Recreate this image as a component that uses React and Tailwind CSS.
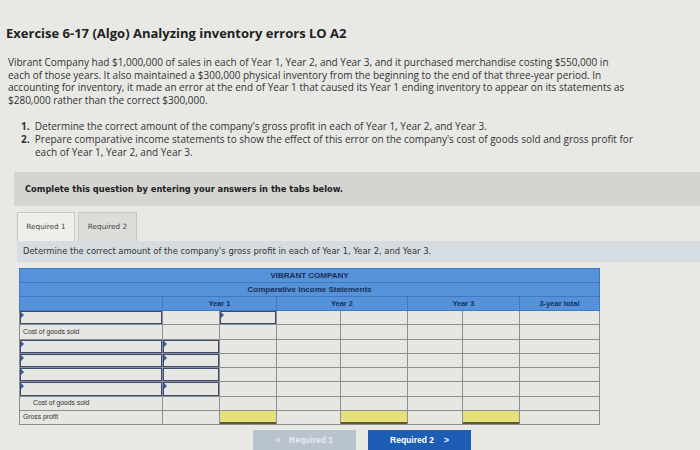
import React from "react";

// small blue marker shown at the top-left of dropdown cells
function Marker() {
    return (
        <span className="absolute left-[1px] top-[1px] w-0 h-0 border-t-[3px] border-b-[3px] border-l-[3px] border-t-transparent border-b-transparent border-l-[#2f5da8]" />
    );
}

function InputCell({ marker = true }) {
    return (
        <td className="relative border border-[#8e8e8e] p-0">
            <div className="absolute inset-0 border border-[#3a4a70]" />
            {marker && <Marker />}
        </td>
    );
}

function Cell({ children, className = "" }) {
    return (
        <td className={"border border-[#8e8e8e] p-0 pl-[3px] text-[6.8px] text-[#333] " + className}>
            {children}
        </td>
    );
}

function YellowCell() {
    return (
        <td className="border border-[#8e8e8e] bg-[#e4e07a] p-0 shadow-[inset_0_-2px_0_#5e5a2c]" />
    );
}

function App() {
    const dropRows = [0, 1, 2, 3];

    return (
        <div className="min-h-[450px] w-[700px] overflow-hidden bg-[#e8e8e4] pt-[25px] font-['Open_Sans','Liberation_Sans',sans-serif] text-[#2b2b2b]">
            <h1 className="pl-[6px] text-[13px] font-bold leading-[16px] text-[#222]">
                Exercise 6-17 (Algo) Analyzing inventory errors LO A2
            </h1>

            <p className="mt-[15px] pl-[8px] text-[10px] leading-[12.6px] whitespace-nowrap text-[#333]">
                Vibrant Company had $1,000,000 of sales in each of Year 1, Year 2, and Year 3, and it purchased merchandise costing $550,000 in<br />
                each of those years. It also maintained a $300,000 physical inventory from the beginning to the end of that three-year period. In<br />
                accounting for inventory, it made an error at the end of Year 1 that caused its Year 1 ending inventory to appear on its statements as<br />
                $280,000 rather than the correct $300,000.
            </p>

            <div className="mt-[14px] pl-[21px] text-[10px] leading-[12.6px] whitespace-nowrap text-[#333]">
                <b>1.</b>&nbsp; Determine the correct amount of the company's gross profit in each of Year 1, Year 2, and Year 3.<br />
                <b>2.</b>&nbsp; Prepare comparative income statements to show the effect of this error on the company's cost of goods sold and gross profit for<br />
                <span className="pl-[14px]">each of Year 1, Year 2, and Year 3.</span>
            </div>

            <div className="mt-[14px] ml-[14px] flex h-[34px] items-center bg-[#d4d4d0] pl-[11px]">
                <span className="font-['DejaVu_Sans',sans-serif] text-[8.3px] font-bold text-[#222]">
                    Complete this question by entering your answers in the tabs below.
                </span>
            </div>

            <div className="ml-[17px] mt-[6px]">
                <div className="flex h-[29px] items-stretch gap-[3px] font-['DejaVu_Sans',sans-serif] text-[7.3px] text-[#444]">
                    <div className="flex w-[58px] items-center justify-center border border-b-0 border-[#c6c6c2] bg-[#eeeeea]">
                        Required 1
                    </div>
                    <div className="flex w-[59px] items-center justify-center border border-b-0 border-[#c6c6c2] bg-[#dcdcd8]">
                        Required 2
                    </div>
                </div>

                <div className="flex h-[21px] items-center bg-[#d6dde2] pl-[6px] font-['DejaVu_Sans',sans-serif] text-[8.4px] text-[#333]">
                    Determine the correct amount of the company's gross profit in each of Year 1, Year 2, and Year 3.
                </div>

                <table className="mt-[6px] ml-[2px] w-[580px] table-fixed border-collapse font-['Liberation_Sans',sans-serif]">
                    <colgroup>
                        <col className="w-[143px]" />
                        <col className="w-[57px]" />
                        <col className="w-[57px]" />
                        <col className="w-[64px]" />
                        <col className="w-[67px]" />
                        <col className="w-[55px]" />
                        <col className="w-[57px]" />
                        <col className="w-[80px]" />
                    </colgroup>
                    <thead className="bg-[#5592d9] text-[8px] font-bold text-[#1b2f57]">
                        <tr className="h-[14px]">
                            <th colSpan={8} className="border border-[#3f78bf] p-0 text-center">VIBRANT COMPANY</th>
                        </tr>
                        <tr className="h-[14px]">
                            <th colSpan={8} className="border border-[#3f78bf] p-0 text-center">Comparative Income Statements</th>
                        </tr>
                        <tr className="h-[14px] text-[7.5px]">
                            <th className="border border-[#3f78bf] p-0" />
                            <th colSpan={2} className="border border-[#3f78bf] p-0 text-center">Year 1</th>
                            <th colSpan={2} className="border border-[#3f78bf] p-0 text-center">Year 2</th>
                            <th colSpan={2} className="border border-[#3f78bf] p-0 text-center">Year 3</th>
                            <th className="border border-[#3f78bf] p-0 text-center">3-year total</th>
                        </tr>
                    </thead>
                    <tbody className="bg-[#e6e6e2]">
                        <tr className="h-[14px]">
                            <InputCell />
                            <Cell />
                            <InputCell />
                            <Cell />
                            <Cell />
                            <Cell />
                            <Cell />
                            <Cell />
                        </tr>
                        <tr className="h-[14.5px]">
                            <Cell>Cost of goods sold</Cell>
                            <Cell />
                            <Cell />
                            <Cell />
                            <Cell />
                            <Cell />
                            <Cell />
                            <Cell />
                        </tr>
                        {dropRows.map((r) => (
                            <tr key={r} className="h-[14.25px]">
                                <InputCell />
                                <InputCell marker={r !== 2} />
                                <Cell />
                                <Cell />
                                <Cell />
                                <Cell />
                                <Cell />
                                <Cell />
                            </tr>
                        ))}
                        <tr className="h-[14px]">
                            <Cell className="pl-[13px]">Cost of goods sold</Cell>
                            <Cell />
                            <Cell />
                            <Cell />
                            <Cell />
                            <Cell />
                            <Cell />
                            <Cell />
                        </tr>
                        <tr className="h-[14px]">
                            <Cell>Gross profit</Cell>
                            <Cell />
                            <YellowCell />
                            <Cell />
                            <YellowCell />
                            <Cell />
                            <YellowCell />
                            <Cell />
                        </tr>
                    </tbody>
                </table>

                <div className="mt-[5px] flex h-[21px] gap-[12px] pl-[236px] font-['Liberation_Sans',sans-serif] text-[8.5px] font-bold">
                    <button className="flex w-[103px] items-center justify-center gap-[8px] bg-[#b9c3cf] text-[#e6ebf1]">
                        <span>&lt;</span>
                        <span>Required 1</span>
                    </button>
                    <button className="flex w-[103px] items-center justify-center gap-[10px] bg-[#1e5db4] text-white">
                        <span>Required 2</span>
                        <span>&gt;</span>
                    </button>
                </div>
            </div>
        </div>
    );
}

export default App;
